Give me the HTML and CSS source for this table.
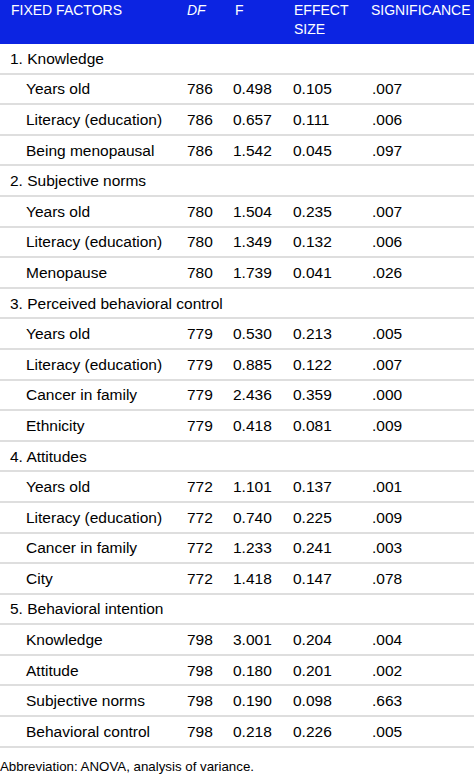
FILE: index.html
```html
<!DOCTYPE html>
<html>
<head>
<meta charset="utf-8">
<link rel="stylesheet" href="styles.css">
</head>
<body>
<div class="table">
  <div class="row head">
    <div class="c">FIXED FACTORS</div>
    <div class="c"><i>DF</i></div>
    <div class="c f">F</div>
    <div class="c">EFFECT<br>SIZE</div>
    <div class="c">SIGNIFICANCE</div>
  </div>

  <div class="row sec"><div class="c">1. Knowledge</div></div>
  <div class="row"><div class="c lab">Years old</div><div class="c">786</div><div class="c">0.498</div><div class="c">0.105</div><div class="c">.007</div></div>
  <div class="row"><div class="c lab">Literacy (education)</div><div class="c">786</div><div class="c">0.657</div><div class="c">0.111</div><div class="c">.006</div></div>
  <div class="row"><div class="c lab">Being menopausal</div><div class="c">786</div><div class="c">1.542</div><div class="c">0.045</div><div class="c">.097</div></div>

  <div class="row sec"><div class="c">2. Subjective norms</div></div>
  <div class="row"><div class="c lab">Years old</div><div class="c">780</div><div class="c">1.504</div><div class="c">0.235</div><div class="c">.007</div></div>
  <div class="row"><div class="c lab">Literacy (education)</div><div class="c">780</div><div class="c">1.349</div><div class="c">0.132</div><div class="c">.006</div></div>
  <div class="row"><div class="c lab">Menopause</div><div class="c">780</div><div class="c">1.739</div><div class="c">0.041</div><div class="c">.026</div></div>

  <div class="row sec"><div class="c">3. Perceived behavioral control</div></div>
  <div class="row"><div class="c lab">Years old</div><div class="c">779</div><div class="c">0.530</div><div class="c">0.213</div><div class="c">.005</div></div>
  <div class="row"><div class="c lab">Literacy (education)</div><div class="c">779</div><div class="c">0.885</div><div class="c">0.122</div><div class="c">.007</div></div>
  <div class="row"><div class="c lab">Cancer in family</div><div class="c">779</div><div class="c">2.436</div><div class="c">0.359</div><div class="c">.000</div></div>
  <div class="row"><div class="c lab">Ethnicity</div><div class="c">779</div><div class="c">0.418</div><div class="c">0.081</div><div class="c">.009</div></div>

  <div class="row sec"><div class="c">4. Attitudes</div></div>
  <div class="row"><div class="c lab">Years old</div><div class="c">772</div><div class="c">1.101</div><div class="c">0.137</div><div class="c">.001</div></div>
  <div class="row"><div class="c lab">Literacy (education)</div><div class="c">772</div><div class="c">0.740</div><div class="c">0.225</div><div class="c">.009</div></div>
  <div class="row"><div class="c lab">Cancer in family</div><div class="c">772</div><div class="c">1.233</div><div class="c">0.241</div><div class="c">.003</div></div>
  <div class="row"><div class="c lab">City</div><div class="c">772</div><div class="c">1.418</div><div class="c">0.147</div><div class="c">.078</div></div>

  <div class="row sec"><div class="c">5. Behavioral intention</div></div>
  <div class="row"><div class="c lab">Knowledge</div><div class="c">798</div><div class="c">3.001</div><div class="c">0.204</div><div class="c">.004</div></div>
  <div class="row"><div class="c lab">Attitude</div><div class="c">798</div><div class="c">0.180</div><div class="c">0.201</div><div class="c">.002</div></div>
  <div class="row"><div class="c lab">Subjective norms</div><div class="c">798</div><div class="c">0.190</div><div class="c">0.098</div><div class="c">.663</div></div>
  <div class="row"><div class="c lab">Behavioral control</div><div class="c">798</div><div class="c">0.218</div><div class="c">0.226</div><div class="c">.005</div></div>
</div>
<p class="note">Abbreviation: ANOVA, analysis of variance.</p>
</body>
</html>
```

FILE: styles.css
```css
html, body {
  margin: 0;
  padding: 0;
  background: #ffffff;
}
body {
  width: 474px;
  overflow: hidden;
  font-family: "Liberation Sans", Arial, Helvetica, sans-serif;
  color: #000000;
}
.table {
  display: flex;
  flex-direction: column;
}
.row {
  display: grid;
  grid-template-columns: 177px 46px 60px 79px 112px;
  align-items: center;
  height: 30.6px;
  box-sizing: border-box;
  border-bottom: 2px solid #dedede;
  font-size: 15.5px;
  line-height: 18px;
  padding-top: 1px;
}
.row .c {
  padding-left: 10px;
  white-space: nowrap;
}
.row .c.lab {
  padding-left: 26px;
}
.row.sec .c {
  grid-column: 1 / -1;
}
.row.head {
  height: 44px;
  background: #0c24e2;
  color: #ffffff;
  align-items: start;
  border-bottom: none;
  font-size: 14px;
  line-height: 19px;
  padding-top: 1px;
}
.row.head .c {
  padding-left: 10px;
}
.row.head .c:first-child {
  padding-left: 11px;
}
.row.head .c.f {
  padding-left: 12px;
}
.row.head .c:nth-child(4) {
  padding-left: 11px;
}
.row.head .c:nth-child(5) {
  padding-left: 9px;
}
.note {
  margin: 11px 0 0 0;
  font-size: 13.3px;
  line-height: 16px;
  color: #000000;
}
```
